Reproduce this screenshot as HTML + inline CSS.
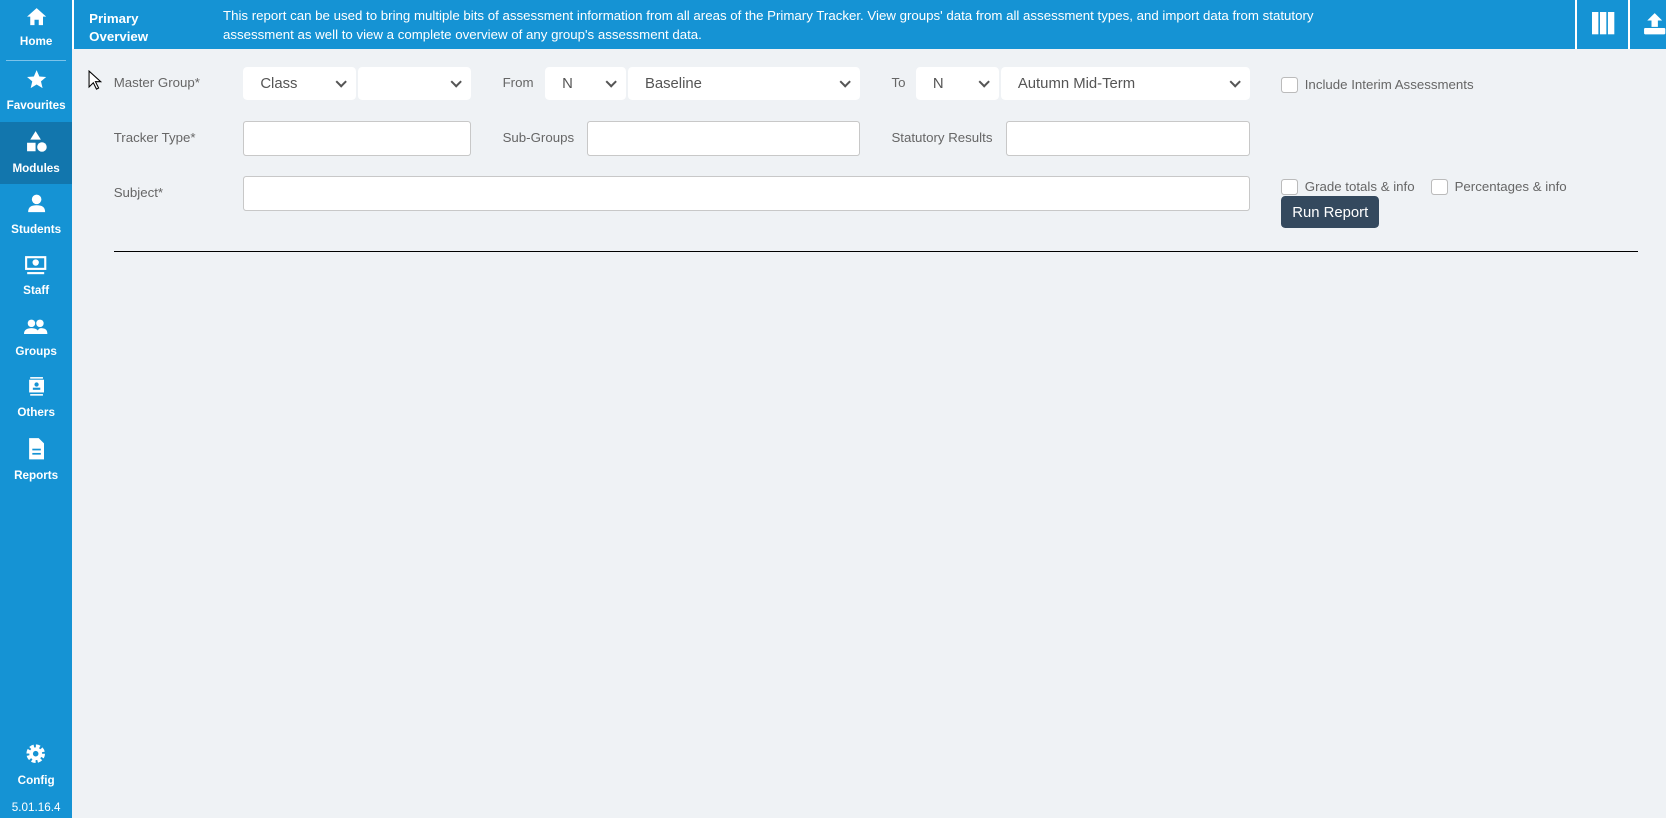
<!DOCTYPE html>
<html style="background:#eff2f5"><head><style>
html{zoom:1.0625}
body{margin:0;width:1568px;height:762px;background:#eff2f5;font-family:"Liberation Sans",Arial,sans-serif;position:relative;overflow:hidden}
.sb{position:absolute;left:0;top:0;width:68px;height:770px;background:#1593d4}
.it{position:absolute;left:0;width:68px;color:#fff;font-size:11px;font-weight:bold;text-align:center}
.it svg{display:block;margin:0 auto 8px}
.top{position:absolute;left:68px;top:0;right:0;height:46px;background:#1593d4;border-left:2px solid #fff;color:#fff;font-size:12.5px}
.ab{position:absolute}
.lbl{position:absolute;font-size:12.5px;color:#666}
.sel{position:absolute;background:#fff;border-radius:4px;height:31px;font-size:14px;color:#555;line-height:33px;box-sizing:border-box;padding-left:16px}
.sel:after{content:"";position:absolute;right:10px;top:10px;width:6px;height:6px;border-right:2px solid #555;border-bottom:2px solid #555;transform:rotate(45deg)}
.inp{position:absolute;background:#fff;border:1px solid #c8c8c8;border-radius:3px;height:33px;box-sizing:border-box}
.cb{position:absolute;width:14px;height:14px;border:1px solid #bbb;border-radius:3px;background:#fff}
</style></head><body>
<div class="sb">
 <div style="position:absolute;left:0;top:115px;width:68px;height:58px;background:#1276ad"></div>
 <div style="position:absolute;left:6px;top:56px;width:56px;height:1px;background:#7cc3ea"></div>
 <div class="it" style="top:7px"><svg width="20" height="18" viewBox="0 0 20 18"><path d="M10 1L1 9h3v8h4v-5h4v5h4V9h3z" fill="#fff"/></svg>Home</div>
 <div class="it" style="top:65px"><svg width="20" height="20" viewBox="0 0 20 20"><path d="M10 1l2.6 6 6.4.5-4.9 4.2 1.5 6.3L10 14.6 4.4 18l1.5-6.3L1 7.5 7.4 7z" fill="#fff"/></svg>Favourites</div>
 <div class="it" style="top:122px"><svg width="20" height="22" viewBox="0 0 20 22"><path d="M9 1l5 8H4z" fill="#fff"/><rect x="1" y="12" width="8" height="8" fill="#fff"/><circle cx="15" cy="16" r="4.5" fill="#fff"/></svg>Modules</div>
 <div class="it" style="top:182px"><svg width="20" height="20" viewBox="0 0 20 20"><circle cx="10" cy="6" r="4.5" fill="#fff"/><path d="M2 18c0-5 3-6.5 8-6.5s8 1.5 8 6.5z" fill="#fff"/></svg>Students</div>
 <div class="it" style="top:239px"><svg width="22" height="20" viewBox="0 0 22 20"><rect x="1" y="2" width="20" height="13" fill="#fff"/><rect x="3" y="4" width="16" height="9" fill="#1593d4"/><circle cx="11" cy="8" r="3" fill="#fff"/><rect x="3" y="17" width="16" height="2" fill="#fff"/></svg>Staff</div>
 <div class="it" style="top:299px"><svg width="22" height="18" viewBox="0 0 22 18"><circle cx="7" cy="5" r="3.5" fill="#fff"/><circle cx="15" cy="5" r="3.5" fill="#fff"/><path d="M0 15c0-4 3-5.5 7-5.5s7 1.5 7 5.5zM12 15c1-4 2-5.5 4-5.5 4 0 6 1.5 6 5.5z" fill="#fff"/></svg>Groups</div>
 <div class="it" style="top:354px"><svg width="18" height="20" viewBox="0 0 18 20"><rect x="3" y="1" width="12" height="1.5" fill="#fff"/><rect x="2" y="3.5" width="14" height="12" fill="#fff"/><rect x="3" y="17" width="12" height="1.5" fill="#fff"/><circle cx="9" cy="8" r="2" fill="#1593d4"/><rect x="5.5" y="11" width="7" height="2" fill="#1593d4"/></svg>Others</div>
 <div class="it" style="top:411px"><svg width="18" height="22" viewBox="0 0 18 22"><path d="M2 1h9l5 5v15H2z" fill="#fff"/><rect x="5" y="11" width="8" height="1.6" fill="#1593d4"/><rect x="5" y="15" width="8" height="1.6" fill="#1593d4"/></svg>Reports</div>
 <div class="it" style="top:698px"><svg width="22" height="22" viewBox="0 0 22 22"><circle cx="11" cy="11" r="6.5" fill="none" stroke="#fff" stroke-width="4.5" stroke-dasharray="3.4 1.7"/><circle cx="11" cy="11" r="6" fill="#fff"/><circle cx="11" cy="11" r="2.6" fill="#1593d4"/></svg>Config</div>
 <div class="it" style="top:754px;font-weight:normal">5.01.16.4</div>
</div>
<div class="top">
 <div class="ab" style="left:14px;top:9px;font-weight:bold;line-height:17px">Primary<br>Overview</div>
 <div class="ab" style="left:140px;top:7px;line-height:17px;width:1100px">This report can be used to bring multiple bits of assessment information from all areas of the Primary Tracker. View groups' data from all assessment types, and import data from statutory<br>assessment as well to view a complete overview of any group's assessment data.</div>
 <div class="ab" style="left:1412px;top:0;width:2px;height:46px;background:#fff"></div>
 <div class="ab" style="left:1462px;top:0;width:2px;height:46px;background:#fff"></div>
 <svg class="ab" style="left:1428px;top:11px" width="22" height="22" viewBox="0 0 22 22"><rect x="0" y="0" width="6" height="21" fill="#fff"/><rect x="7.5" y="0" width="6" height="21" fill="#fff"/><rect x="15" y="0" width="6" height="21" fill="#fff"/></svg>
 <svg class="ab" style="left:1476px;top:11px" width="22" height="22" viewBox="0 0 22 22"><path d="M11 1l7 7h-4v6H8V8H4z" fill="#fff"/><rect x="1" y="15" width="20" height="6" rx="1" fill="#fff"/></svg>
</div>
<svg class="ab" style="left:83px;top:66px" width="14" height="20" viewBox="0 0 14 20"><path d="M1 1v15l4-4 3 6 2-1-3-6h5z" fill="#fff" stroke="#000"/></svg>
<div class="lbl" style="left:107px;top:71px">Master Group*</div>
<div class="sel" style="left:229px;top:63px;width:106px">Class</div>
<div class="sel" style="left:337px;top:63px;width:106px"></div>
<div class="lbl" style="left:473px;top:71px">From</div>
<div class="sel" style="left:513px;top:63px;width:76px">N</div>
<div class="sel" style="left:591px;top:63px;width:218px">Baseline</div>
<div class="lbl" style="left:839px;top:71px">To</div>
<div class="sel" style="left:862px;top:63px;width:78px">N</div>
<div class="sel" style="left:942px;top:63px;width:234px">Autumn Mid-Term</div>
<div class="cb" style="left:1206px;top:72px"></div>
<div class="lbl" style="left:1228px;top:72px">Include Interim Assessments</div>
<div class="lbl" style="left:107px;top:122px">Tracker Type*</div>
<div class="inp" style="left:229px;top:114px;width:214px"></div>
<div class="lbl" style="left:473px;top:122px">Sub-Groups</div>
<div class="inp" style="left:552px;top:114px;width:257px"></div>
<div class="lbl" style="left:839px;top:122px">Statutory Results</div>
<div class="inp" style="left:947px;top:114px;width:229px"></div>
<div class="lbl" style="left:107px;top:174px">Subject*</div>
<div class="inp" style="left:229px;top:166px;width:947px"></div>
<div class="cb" style="left:1206px;top:168px"></div>
<div class="lbl" style="left:1228px;top:168px">Grade totals &amp; info</div>
<div class="cb" style="left:1347px;top:168px"></div>
<div class="lbl" style="left:1369px;top:168px">Percentages &amp; info</div>
<div class="ab" style="left:1206px;top:184px;width:92px;height:31px;background:#34495e;border-radius:4px;color:#fff;font-size:14px;line-height:32px;text-align:center">Run Report</div>
<div class="ab" style="left:107px;top:236px;width:1435px;height:1px;background:#000"></div>
</body></html>
